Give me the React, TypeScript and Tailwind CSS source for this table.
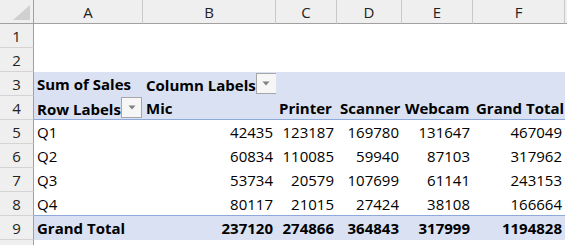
import React from 'react';

type RowKind = 'empty' | 'head' | 'headBottom' | 'data' | 'dataBeforeTotal' | 'total';

interface SheetCell {
  text?: string;
  align?: 'left' | 'right';
  bold?: boolean;
  filter?: boolean;
}

interface SheetRow {
  num: number;
  label: string;
  kind: RowKind;
  cells: SheetCell[];
}

const COLUMNS = ['A', 'B', 'C', 'D', 'E', 'F'];

const products = ['Mic', 'Printer', 'Scanner', 'Webcam', 'Grand Total'];

const quarters: [string, number[]][] = [
  ['Q1', [42435, 123187, 169780, 131647, 467049]],
  ['Q2', [60834, 110085, 59940, 87103, 317962]],
  ['Q3', [53734, 20579, 107699, 61141, 243153]],
  ['Q4', [80117, 21015, 27424, 38108, 166664]],
];

const grandTotals = [237120, 274866, 364843, 317999, 1194828];

const blank = (): SheetCell[] => COLUMNS.map(() => ({}));

const rows: SheetRow[] = [
  { num: 1, label: '1', kind: 'empty', cells: blank() },
  { num: 2, label: '2', kind: 'empty', cells: blank() },
  {
    num: 3,
    label: '3',
    kind: 'head',
    cells: [
      { text: 'Sum of Sales', bold: true },
      { text: 'Column Labels', bold: true, filter: true },
      {},
      {},
      {},
      {},
    ],
  },
  {
    num: 4,
    label: '4',
    kind: 'headBottom',
    cells: [
      { text: 'Row Labels', bold: true, filter: true },
      ...products.map((p) => ({ text: p, bold: true })),
    ],
  },
  ...quarters.map(([q, values], i) => ({
    num: 5 + i,
    label: String(5 + i),
    kind: (i === quarters.length - 1 ? 'dataBeforeTotal' : 'data') as RowKind,
    cells: [{ text: q }, ...values.map((v) => ({ text: String(v), align: 'right' as const }))],
  })),
  {
    num: 9,
    label: '9',
    kind: 'total',
    cells: [
      { text: 'Grand Total', bold: true },
      ...grandTotals.map((v) => ({ text: String(v), align: 'right' as const, bold: true })),
    ],
  },
  // next row only peeks in at the bottom edge
  { num: 10, label: '', kind: 'empty', cells: blank() },
];

function FilterButton() {
  return (
    <div className="ml-auto mr-[1px] mt-[1px] flex h-[21px] w-[21px] shrink-0 items-center justify-center self-start border border-[#a6a6a6] bg-[#f6f6f6]">
      <svg width="8" height="5" viewBox="0 0 8 5">
        <path d="M0.5 0.5 L7.5 0.5 L4 4.5 Z" fill="#808080" />
      </svg>
    </div>
  );
}

function rowBackground(kind: RowKind) {
  if (kind === 'head' || kind === 'headBottom' || kind === 'total') return 'bg-[#d9e1f2]';
  return 'bg-white';
}

function rowBorder(kind: RowKind) {
  if (kind === 'headBottom' || kind === 'dataBeforeTotal') return 'border-b border-b-[#8eaadb]';
  return 'border-b border-b-transparent';
}

export default function App() {
  return (
    <div
      className="grid h-[245px] w-[567px] grid-cols-[34px_109px_133px_61px_65px_71px_92px_1fr] auto-rows-[24px] overflow-hidden bg-white text-[15px] text-black"
      style={{ fontFamily: '"Open Sans", "Noto Sans", sans-serif' }}
    >
      {/* Corner cell with the select-all triangle */}
      <div className="relative border-b border-r border-b-[#a0a0a0] border-r-[#a0a0a0] bg-[#efefef]">
        <svg className="absolute left-0 top-0" width="33" height="23" viewBox="0 0 33 23">
          <path d="M30 5 L30 20 L13 20 Z" fill="#d0d0d0" />
        </svg>
      </div>

      {/* Column letters */}
      {COLUMNS.map((c) => (
        <div
          key={c}
          className="flex items-center justify-center border-b border-r border-b-[#a0a0a0] border-r-[#c8c8c8] bg-[#efefef] leading-[18px] text-[#222]"
        >
          {c}
        </div>
      ))}
      <div className="border-b border-b-[#a0a0a0] bg-[#efefef]" />

      {rows.map((row) => (
        <React.Fragment key={row.num}>
          <div className="flex items-center justify-center border-b border-r border-b-[#d4d4d4] border-r-[#a0a0a0] bg-[#efefef] leading-[18px] text-[#222]">
            {row.label}
          </div>
          {row.cells.map((cell, ci) => (
            <div
              key={ci}
              className={`flex items-end whitespace-nowrap pb-[1px] leading-[20px] ${rowBackground(row.kind)} ${rowBorder(row.kind)} ${
                cell.align === 'right' ? 'justify-end pr-[3px]' : 'justify-start pl-[3px]'
              } ${cell.bold ? 'font-bold' : ''}`}
            >
              {cell.text && <span className={cell.filter ? 'mb-[-1px]' : ''}>{cell.text}</span>}
              {cell.filter && <FilterButton />}
            </div>
          ))}
          <div className="bg-white" />
        </React.Fragment>
      ))}
    </div>
  );
}
